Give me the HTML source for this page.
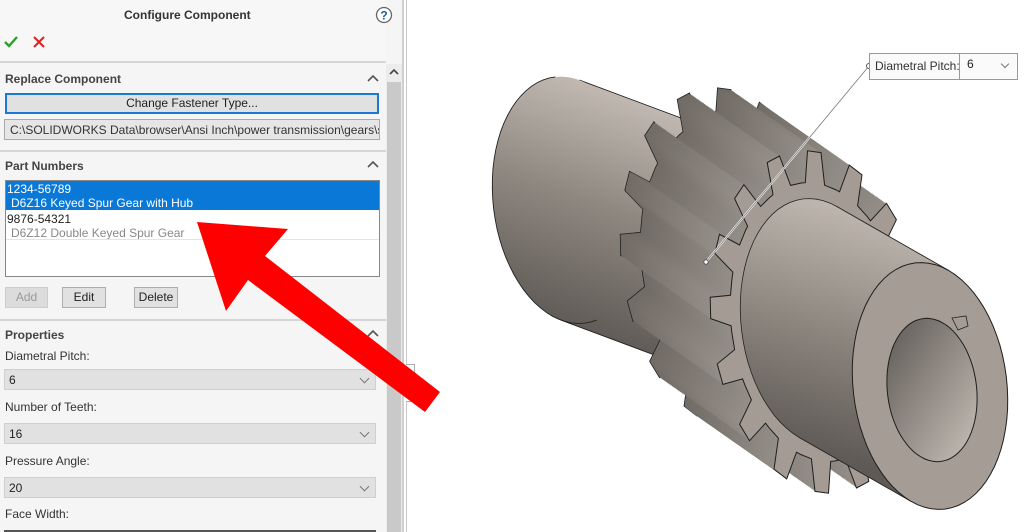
<!DOCTYPE html>
<html><head><meta charset="utf-8"><style>
*{margin:0;padding:0;box-sizing:border-box}
html,body{width:1024px;height:532px;overflow:hidden}
body{background:#fff;font-family:"Liberation Sans",sans-serif;position:relative}
.a{position:absolute}
#panel{left:0;top:0;width:403px;height:532px;background:#f5f5f5;overflow:hidden}
.t{font-size:12px;color:#222;white-space:nowrap}
.h{font-size:12px;font-weight:bold;color:#444}
.sep{left:0;width:386px;height:2px;background:#d6d6d6}
.chev{width:14px;height:10px}
.sel{left:4px;width:372px;height:21px;background:#e1e1e1;border:1px solid #cfcfcf;font-size:12px;padding:3px 4px;color:#222}
.sel:after{content:"";position:absolute;right:7px;top:5px;width:6px;height:6px;border-right:1px solid #777;border-bottom:1px solid #777;transform:rotate(45deg)}
.btn{height:21px;background:#e1e1e1;border:1px solid #adadad;font-size:12px;text-align:center;line-height:19px;color:#222}
</style></head><body>
<div id="panel" class="a">
 <div class="a" style="left:0;top:0;width:386px;height:62px;background:#f7f7f7"></div>
 <div class="a t" style="left:124px;top:8px;font-weight:bold;color:#333">Configure Component</div>
 <svg class="a" style="left:375px;top:6px" width="18" height="18"><circle cx="9" cy="9" r="7.5" fill="#fff" stroke="#666" stroke-width="1.3"/><text x="9" y="13.5" text-anchor="middle" font-size="12" font-weight="bold" fill="#1a5fa8" font-family="Liberation Sans">?</text></svg>
 <svg class="a" style="left:3px;top:34px" width="16" height="16"><path d="M2 8 L6 12 L14 3" stroke="#2aa02a" stroke-width="2.4" fill="none"/></svg>
 <svg class="a" style="left:32px;top:35px" width="14" height="14"><path d="M2 2 L12 12 M12 2 L2 12" stroke="#e02020" stroke-width="2" fill="none"/></svg>
 <div class="a sep" style="top:61px"></div>
 <div class="a h" style="left:5px;top:72px">Replace Component</div>
 <svg class="a chev" style="left:366px;top:74px"><path d="M2 7 L7 2 L12 7" stroke="#555" stroke-width="1.6" fill="none"/></svg>
 <div class="a btn" style="left:5px;top:93px;width:374px;border:2px solid #1a78d6;line-height:17px">Change Fastener Type...</div>
 <div class="a t" style="left:4px;top:119px;width:376px;height:21px;background:#e6e6e6;border:1px solid #aaa;padding:3px 5px;overflow:hidden;color:#333">C:\SOLIDWORKS Data\browser\Ansi Inch\power transmission\gears\spur gear</div>
 <div class="a sep" style="top:150px"></div>
 <div class="a h" style="left:5px;top:159px">Part Numbers</div>
 <svg class="a chev" style="left:366px;top:160px"><path d="M2 7 L7 2 L12 7" stroke="#555" stroke-width="1.6" fill="none"/></svg>
 <div class="a" style="left:5px;top:180px;width:375px;height:97px;background:#fff;border:1px solid #888"></div>
 <div class="a" style="left:6px;top:181px;width:373px;height:29px;background:#0a78d6"></div>
 <div class="a t" style="left:7px;top:182px;color:#fff">1234-56789</div>
 <div class="a t" style="left:11px;top:196px;color:#fff">D6Z16 Keyed Spur Gear with Hub</div>
 <div class="a t" style="left:7px;top:212px">9876-54321</div>
 <div class="a t" style="left:11px;top:226px;color:#888">D6Z12 Double Keyed Spur Gear</div>
 <div class="a" style="left:6px;top:239px;width:373px;height:1px;background:#e4e4e4"></div>
 <div class="a btn" style="left:5px;top:287px;width:43px;color:#999;border-color:#ccc;background:#dcdcdc">Add</div>
 <div class="a btn" style="left:62px;top:287px;width:44px">Edit</div>
 <div class="a btn" style="left:134px;top:287px;width:44px">Delete</div>
 <div class="a sep" style="top:319px"></div>
 <div class="a h" style="left:5px;top:328px">Properties</div>
 <svg class="a chev" style="left:366px;top:329px"><path d="M2 7 L7 2 L12 7" stroke="#555" stroke-width="1.6" fill="none"/></svg>
 <div class="a t" style="left:5px;top:349px;color:#333">Diametral Pitch:</div>
 <div class="a sel" style="top:369px">6</div>
 <div class="a t" style="left:5px;top:400px;color:#333">Number of Teeth:</div>
 <div class="a sel" style="top:423px">16</div>
 <div class="a t" style="left:5px;top:454px;color:#333">Pressure Angle:</div>
 <div class="a sel" style="top:477px">20</div>
 <div class="a t" style="left:5px;top:507px;color:#333">Face Width:</div>
 <div class="a" style="left:4px;top:530px;width:372px;height:2px;background:#555"></div>
 <div class="a" style="left:386px;top:64px;width:16px;height:468px;background:#ececec"></div>
 <div class="a" style="left:387px;top:82px;width:14px;height:450px;background:#c9c9c9"></div>
 <svg class="a" style="left:389px;top:68px" width="10" height="8"><path d="M1 6 L5 2 L9 6" stroke="#444" stroke-width="1.6" fill="none"/></svg>
</div>
<div class="a" style="left:402px;top:0;width:2px;height:532px;background:#d0d0d0"></div>
<div class="a" style="left:406px;top:0;width:1px;height:532px;background:#c8c8c8"></div>
<div class="a" style="left:406px;top:364px;width:9px;height:38px;border:1px solid #aaa;border-left:none;background:#fff"></div>

<svg id="g" class="a" style="left:0;top:0" width="1024" height="532"></svg>

<div class="a" style="left:869px;top:53px;width:149px;height:27px;border:1px solid #999;background:#fafafa"></div>
<div class="a t" style="left:875px;top:59px;color:#333">Diametral Pitch:</div>
<div class="a" style="left:959px;top:53px;width:1px;height:27px;background:#999"></div>
<div class="a t" style="left:967px;top:57px;color:#222">6</div>
<div class="a" style="left:1002px;top:61px;width:6px;height:6px;border-right:1px solid #777;border-bottom:1px solid #777;transform:rotate(45deg)"></div>

<script>
var NS="http://www.w3.org/2000/svg",svg=document.getElementById('g');
function el(n,a){var e=document.createElementNS(NS,n);for(var k in a)e.setAttribute(k,a[k]);svg.appendChild(e);return e;}
var defs=el('defs',{});
defs.innerHTML='<linearGradient id="cyl" gradientUnits="userSpaceOnUse" x1="640" y1="95" x2="560" y2="320"><stop offset="0" stop-color="#c4bcb4"/><stop offset="0.5" stop-color="#8e8780"/><stop offset="1" stop-color="#615c57"/></linearGradient>'+
'<linearGradient id="cyl2" gradientUnits="userSpaceOnUse" x1="905" y1="215" x2="835" y2="460"><stop offset="0" stop-color="#c2bab2"/><stop offset="0.55" stop-color="#8a837c"/><stop offset="1" stop-color="#5e5955"/></linearGradient>'+
'<linearGradient id="bore" x1="0" y1="0" x2="1" y2="1"><stop offset="0" stop-color="#5e5955"/><stop offset="1" stop-color="#c8c0b8"/></linearGradient>';
var ang=-0.12, RX=0.62;
function P(cx,cy,r,t){var x=r*RX*Math.cos(t),y=r*Math.sin(t);return [cx+x*Math.cos(ang)-y*Math.sin(ang),cy+x*Math.sin(ang)+y*Math.cos(ang)];}
function gearPath(cx,cy){var N=16,d='',Ro=172,Rr=140;
 for(var i=0;i<N;i++){var b=i*2*Math.PI/N,w=2*Math.PI/N;
  var pts=[[Rr,b],[Rr,b+w*0.12],[Ro,b+w*0.24],[Ro,b+w*0.56],[Rr,b+w*0.68]];
  pts.forEach(function(p,j){var q=P(cx,cy,p[0],p[1]);d+=(i==0&&j==0?'M':'L')+q[0].toFixed(1)+' '+q[1].toFixed(1);});}
 return d+'Z';}
function ell(cx,cy,r,fill,stroke,sw){var d='';for(var i=0;i<=72;i++){var q=P(cx,cy,r,i/72*2*Math.PI);d+=(i?'L':'M')+q[0].toFixed(1)+' '+q[1].toFixed(1);}return el('path',{d:d+'Z',fill:fill,stroke:stroke||'none','stroke-width':sw||1});}
function cyl(c1,c2,r,fill){
 var dx=c2[0]-c1[0],dy=c2[1]-c1[1];var best=[0,0];var mn=1e9,mx=-1e9;
 for(var i=0;i<360;i++){var t=i/360*2*Math.PI;var q=P(0,0,r,t);var v=q[0]*(-dy)+q[1]*dx;if(v<mn){mn=v;best[0]=t}if(v>mx){mx=v;best[1]=t}}
 var a=P(c1[0],c1[1],r,best[0]),b=P(c2[0],c2[1],r,best[0]),c=P(c2[0],c2[1],r,best[1]),e=P(c1[0],c1[1],r,best[1]);
 el('path',{d:'M'+a+'L'+b+'L'+c+'L'+e+'Z',fill:fill});
 el('path',{d:'M'+a+'L'+b+'M'+c+'L'+e,stroke:'#222','stroke-width':0.9,fill:'none'});}
var F=[818,322],off=[-90,-63],B=[F[0]+off[0],F[1]+off[1]];
var LH=[570,200],RH=[930,386];
cyl(LH,B,124,'url(#cyl)');
ell(LH[0],LH[1],124,'url(#cyl)','none');
(function(){var d='';for(var i=0;i<=40;i++){var t=Math.PI*0.45+i/40*Math.PI*1.05;var q=P(LH[0],LH[1],124,t);d+=(i?'L':'M')+q[0].toFixed(1)+' '+q[1].toFixed(1);}el('path',{d:d,fill:'none',stroke:'#222','stroke-width':0.9});})();
var S=70;
for(var s=S;s>=1;s--){var k=s/S;var c=Math.round(105+(1-k)*35);
 el('path',{d:gearPath(F[0]+off[0]*k,F[1]+off[1]*k),fill:'rgb('+(c+8)+','+(c+2)+','+(c-4)+')',stroke:s==S?'#222':'none','stroke-width':0.8});}
el('path',{d:gearPath(F[0],F[1]),fill:'#a39b94',stroke:'#1e1e1e','stroke-width':1});
ell(F[0],F[1],124,'url(#cyl2)','#222',0.8);
cyl(F,RH,124,'url(#cyl2)');
ell(RH[0],RH[1],124,'#a49c95','#1e1e1e',1);
ell(RH[0]+2,RH[1]+4,72,'url(#bore)','#1e1e1e',1);
el('path',{d:'M952 318 L966 316 L968 326 L958 330Z',fill:'#a49c95',stroke:'#222','stroke-width':0.8});
el('line',{x1:869,y1:66,x2:706,y2:262,stroke:'#fff','stroke-width':2});
el('line',{x1:869,y1:66,x2:706,y2:262,stroke:'#777','stroke-width':0.8});
el('circle',{cx:869,cy:66,r:2.5,fill:'#fff',stroke:'#555'});
el('circle',{cx:706,cy:262,r:2.2,fill:'#fff',stroke:'#555'});
el('path',{d:'M197 222 L288 229 L265 256 L440 392 L425 412 L248 280 L226 311Z',fill:'#ff0000'});
</script>
</body></html>
